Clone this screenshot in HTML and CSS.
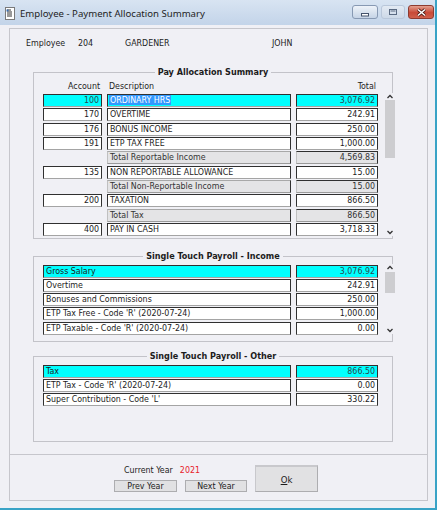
FILE: index.html
```html
<!DOCTYPE html>
<html>
<head>
<meta charset="utf-8">
<link rel="stylesheet" href="styles.css">
</head>
<body>
<div class="window">
  <div class="titlebar">
    <svg class="app-icon" width="12" height="13" viewBox="0 0 12 13">
      <rect x="1.5" y="0.5" width="9" height="12" fill="#fff" stroke="#7a7a7a"/>
      <path d="M3 3h4M3 5h5M3 7h5M3 9h5" stroke="#333" stroke-width="1"/>
      <rect x="2.5" y="2.5" width="2" height="2" fill="#3a6fb0"/>
    </svg>
    <span class="title">Employee - Payment Allocation Summary</span>
    <div class="caption-buttons">
      <div class="cbtn min"><svg width="10" height="6" viewBox="0 0 10 6"><rect x="1.5" y="2.5" width="7" height="2.5" fill="#fff" stroke="#45536b"/></svg></div>
      <div class="cbtn max"><svg width="10" height="8" viewBox="0 0 10 8"><rect x="1.5" y="1.5" width="7" height="5" fill="none" stroke="#5a6a82"/><rect x="2.5" y="2.5" width="5" height="1" fill="#5a6a82"/></svg></div>
      <div class="cbtn close"><svg width="11" height="9" viewBox="0 0 11 9"><path d="M2 1.5l7 6M9 1.5l-7 6" stroke="#4a1a14" stroke-width="3"/><path d="M2 1.5l7 6M9 1.5l-7 6" stroke="#fff" stroke-width="1.6"/></svg></div>
    </div>
  </div>
  <div class="client">
    <div class="frame">
      <div class="main">
        <div class="emp-row">
          <span class="emp-label">Employee</span>
          <span class="emp-no">204</span>
          <span class="emp-surname">GARDENER</span>
          <span class="emp-first">JOHN</span>
        </div>

        <div class="group g1">
          <span class="group-title">Pay Allocation Summary</span>
          <div class="grid3 head">
            <div class="h-right">Account</div>
            <div class="h-left">Description</div>
            <div class="h-right">Total</div>
          </div>
          <div class="grid3 rows">
            <div class="cell num sel">100</div><div class="cell sel"><span class="hl">ORDINARY HRS</span></div><div class="cell num sel">3,076.92</div>
            <div class="cell num">170</div><div class="cell">OVERTIME</div><div class="cell num">242.91</div>
            <div class="cell num">176</div><div class="cell">BONUS INCOME</div><div class="cell num">250.00</div>
            <div class="cell num">191</div><div class="cell">ETP TAX FREE</div><div class="cell num">1,000.00</div>
            <div class="blank"></div><div class="cell tot">Total Reportable Income</div><div class="cell num tot">4,569.83</div>
            <div class="cell num">135</div><div class="cell">NON REPORTABLE ALLOWANCE</div><div class="cell num">15.00</div>
            <div class="blank"></div><div class="cell tot">Total Non-Reportable Income</div><div class="cell num tot">15.00</div>
            <div class="cell num">200</div><div class="cell">TAXATION</div><div class="cell num">866.50</div>
            <div class="blank"></div><div class="cell tot">Total Tax</div><div class="cell num tot">866.50</div>
            <div class="cell num">400</div><div class="cell">PAY IN CASH</div><div class="cell num">3,718.33</div>
          </div>
          <div class="vscroll vs1">
            <svg class="arrow" width="10" height="7" viewBox="0 0 10 7"><path d="M2.5 5L5 2.5L7.5 5" fill="none" stroke="#333" stroke-width="1.3"/></svg>
            <div class="track"><div class="thumb t1"></div></div>
            <svg class="arrow" width="10" height="7" viewBox="0 0 10 7"><path d="M2.5 2L5 4.5L7.5 2" fill="none" stroke="#333" stroke-width="1.3"/></svg>
          </div>
        </div>

        <div class="group g2">
          <span class="group-title">Single Touch Payroll - Income</span>
          <div class="grid2 rows">
            <div class="cell sel">Gross Salary</div><div class="cell num sel">3,076.92</div>
            <div class="cell">Overtime</div><div class="cell num">242.91</div>
            <div class="cell">Bonuses and Commissions</div><div class="cell num">250.00</div>
            <div class="cell">ETP Tax Free - Code 'R' (2020-07-24)</div><div class="cell num">1,000.00</div>
            <div class="cell">ETP Taxable - Code 'R' (2020-07-24)</div><div class="cell num">0.00</div>
          </div>
          <div class="vscroll vs2">
            <svg class="arrow" width="10" height="7" viewBox="0 0 10 7"><path d="M2.5 5L5 2.5L7.5 5" fill="none" stroke="#333" stroke-width="1.3"/></svg>
            <div class="track"><div class="thumb t2"></div></div>
            <svg class="arrow" width="10" height="7" viewBox="0 0 10 7"><path d="M2.5 2L5 4.5L7.5 2" fill="none" stroke="#333" stroke-width="1.3"/></svg>
          </div>
        </div>

        <div class="group g3">
          <span class="group-title">Single Touch Payroll - Other</span>
          <div class="grid2 rows r3">
            <div class="cell sel">Tax</div><div class="cell num sel">866.50</div>
            <div class="cell">ETP Tax - Code 'R' (2020-07-24)</div><div class="cell num">0.00</div>
            <div class="cell">Super Contribution - Code 'L'</div><div class="cell num">330.22</div>
          </div>
        </div>
      </div>

      <div class="footer">
        <div class="year-col">
          <div class="year-line"><span class="year-label">Current Year</span><span class="year-val">2021</span></div>
          <div class="year-btns">
            <div class="btn small">Prev Year</div>
            <div class="btn small next">Next Year</div>
          </div>
        </div>
        <div class="btn ok"><span class="ul">O</span>k</div>
      </div>
    </div>
  </div>
</div>
</body>
</html>
```

FILE: styles.css
```css
html, body {
  margin: 0;
  padding: 0;
  background: #ffffff;
}

body {
  font-family: "DejaVu Sans Condensed", "DejaVu Sans", sans-serif;
  font-size: 8.8px;
  color: #1c1c1c;
}

.window {
  width: 435px;
  height: 508px;
  background: #f0f0f5;
  border-right: 2px solid #39a3c6;
  border-bottom: 2px solid #39a3c6;
  display: flex;
  flex-direction: column;
}

.titlebar {
  height: 25px;
  flex: none;
  display: flex;
  align-items: center;
  background: linear-gradient(#d8e4f2, #c3d4e9);
  padding-left: 4px;
  box-sizing: border-box;
}

.app-icon {
  display: block;
  margin-top: 1px;
}

.title {
  font-family: "Noto Sans", "Open Sans", sans-serif;
  font-size: 9.6px;
  color: #1e1e1e;
  margin-left: 4px;
  flex: 1;
  margin-top: 1px;
}

.caption-buttons {
  display: flex;
  gap: 3px;
  margin-right: 1px;
  margin-top: -1px;
}

.cbtn {
  height: 14px;
  width: 26px;
  box-sizing: border-box;
  border-radius: 3px;
  display: flex;
  align-items: center;
  justify-content: center;
}

.cbtn.min {
  border: 1px solid #8799b3;
  background: linear-gradient(#eef3f9, #c6d4e6);
}

.cbtn.min svg { margin-top: 3px; }

.cbtn.max {
  width: 24px;
  border: 1px solid #b9c7da;
  background: linear-gradient(#e3eaf3, #cdd9e8);
}

.cbtn.close {
  border: 1px solid #8d3b30;
  background: linear-gradient(#e4a090, #c84a37 55%, #d0604c);
}

.client {
  flex: 1;
  padding: 3px 0 0 9px;
}

.frame {
  width: 419px;
  height: 473px;
  box-sizing: border-box;
  border: 1px solid #c6c6cc;
  display: flex;
  flex-direction: column;
}

.main {
  height: 426px;
  border-bottom: 1px solid #c6c6cc;
  padding-top: 8px;
  box-sizing: border-box;
}

.emp-row {
  display: flex;
  height: 12px;
  line-height: 12px;
  padding-left: 16px;
}

.emp-label { width: 52px; }
.emp-no { width: 47px; }
.emp-surname { width: 147px; }

.group {
  position: relative;
  margin-left: 23px;
  width: 360px;
  box-sizing: border-box;
  border: 1px solid #c3c3c9;
  padding-left: 9px;
}

.group-title {
  position: absolute;
  top: -7px;
  left: 0;
  right: 0;
  margin: 0 auto;
  width: max-content;
  padding: 0 3px;
  background: #f0f0f5;
  font-weight: bold;
  font-size: 9px;
  line-height: 12px;
}

.g1 {
  margin-top: 23px;
  padding-top: 7px;
  height: 167px;
}

.g2 {
  margin-top: 17px;
  padding-top: 8px;
  height: 86px;
}

.g3 {
  margin-top: 14px;
  padding-top: 8px;
  height: 86px;
}

.grid3 {
  display: grid;
  grid-template-columns: 59px 184px 82px;
  column-gap: 5px;
}

.grid2 {
  display: grid;
  grid-template-columns: 248px 82px;
  column-gap: 5px;
}

.head {
  height: 12px;
  line-height: 12px;
  margin-bottom: 2px;
}

.h-right { text-align: right; padding-right: 2px; }
.h-left { padding-left: 2px; }

.rows { row-gap: 1.33px; }
.g2 .rows { row-gap: 1.15px; }
.rows.r3 { row-gap: 1px; }

.cell {
  height: 13px;
  box-sizing: border-box;
  border: 1px solid #303030;
  border-bottom-color: #a4a4a4;
  background: #ffffff;
  line-height: 11px;
  padding: 0 2px;
  white-space: nowrap;
  overflow: hidden;
}

.cell.num { text-align: right; }

.cell.sel { background: #00ffff; }
.cell.num.sel { color: #2a4a50; }

.hl {
  background: #3399ff;
  color: #ffffff;
  padding: 0 1px;
  margin-left: -1px;
}

.cell.tot {
  background: #e4e4e6;
  color: #333;
  border-color: #a8a8a8 #303030 #9a9a9a #c0c0c0;
}

.cell.num.tot {
  border-color: #303030 #303030 #9a9a9a #c0c0c0;
}

.vscroll {
  position: absolute;
  left: 351px;
  width: 10px;
  display: flex;
  flex-direction: column;
  background: #f0f0f5;
}

.vs1 { top: 20px; height: 143px; }
.vs2 { top: 7px; height: 70px; }

.arrow {
  display: block;
  height: 7px;
  flex: none;
}

.track {
  flex: 1;
  display: flex;
  flex-direction: column;
}

.thumb {
  background: #cdcdd0;
}

.t1 { height: 58px; margin-top: 0; }
.t2 { height: 21px; margin-top: 1px; }

.footer {
  flex: 1;
  display: flex;
  padding: 10px 0 0 104px;
  gap: 8px;
}

.year-col {
  width: 133px;
}

.year-line {
  height: 12px;
  line-height: 12px;
  padding-left: 10px;
  margin-top: -1px;
}

.year-label { margin-right: 7px; }
.year-val { color: #e8202a; }

.year-btns {
  display: flex;
  gap: 8px;
  margin-top: 4px;
}

.btn {
  box-sizing: border-box;
  background: #e1e1e3;
  border: 1px solid #adadb0;
  text-align: center;
}

.btn.small {
  width: 63px;
  height: 12px;
  line-height: 10px;
}

.btn.small.next { width: 62px; }

.btn.ok {
  width: 63px;
  height: 27px;
  line-height: 25px;
  border-width: 2px 1px 1px 1px;
  border-color: #c8c8cc #adadb0 #adadb0 #c8c8cc;
  font-size: 9.5px;
}

.ul { text-decoration: underline; }
```
